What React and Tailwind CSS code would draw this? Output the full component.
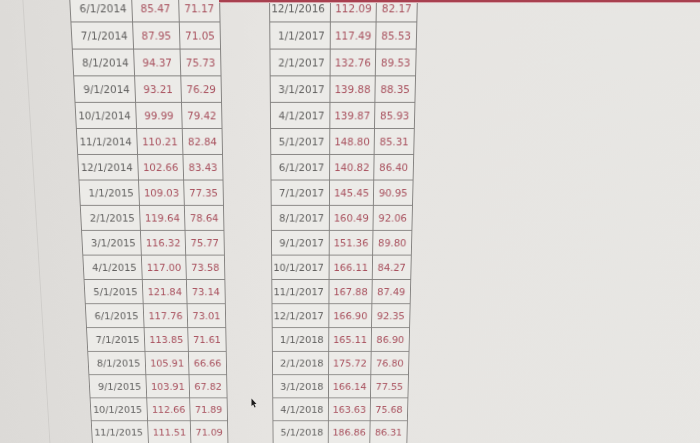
const LEFT = [
  ['6/1/2014', '85.47', '71.17'],
  ['7/1/2014', '87.95', '71.05'],
  ['8/1/2014', '94.37', '75.73'],
  ['9/1/2014', '93.21', '76.29'],
  ['10/1/2014', '99.99', '79.42'],
  ['11/1/2014', '110.21', '82.84'],
  ['12/1/2014', '102.66', '83.43'],
  ['1/1/2015', '109.03', '77.35'],
  ['2/1/2015', '119.64', '78.64'],
  ['3/1/2015', '116.32', '75.77'],
  ['4/1/2015', '117.00', '73.58'],
  ['5/1/2015', '121.84', '73.14'],
  ['6/1/2015', '117.76', '73.01'],
  ['7/1/2015', '113.85', '71.61'],
  ['8/1/2015', '105.91', '66.66'],
  ['9/1/2015', '103.91', '67.82'],
  ['10/1/2015', '112.66', '71.89'],
  ['11/1/2015', '111.51', '71.09'],
];

const RIGHT = [
  ['12/1/2016', '112.09', '82.17'],
  ['1/1/2017', '117.49', '85.53'],
  ['2/1/2017', '132.76', '89.53'],
  ['3/1/2017', '139.88', '88.35'],
  ['4/1/2017', '139.87', '85.93'],
  ['5/1/2017', '148.80', '85.31'],
  ['6/1/2017', '140.82', '86.40'],
  ['7/1/2017', '145.45', '90.95'],
  ['8/1/2017', '160.49', '92.06'],
  ['9/1/2017', '151.36', '89.80'],
  ['10/1/2017', '166.11', '84.27'],
  ['11/1/2017', '167.88', '87.49'],
  ['12/1/2017', '166.90', '92.35'],
  ['1/1/2018', '165.11', '86.90'],
  ['2/1/2018', '175.72', '76.80'],
  ['3/1/2018', '166.14', '77.55'],
  ['4/1/2018', '163.63', '75.68'],
  ['5/1/2018', '186.86', '86.31'],
];

const CELL = 'h-[27px] border border-[#858381] p-0';

function PriceTable({ rows, widths }) {
  return (
    <table className="table-fixed border-collapse bg-[#ecebe8]">
      <colgroup>
        {widths.map((w, i) => <col key={i} style={{ width: w }} />)}
      </colgroup>
      <tbody>
        {rows.map(([date, a, b]) => (
          <tr key={date}>
            <td className={`${CELL} pr-[5px] text-right text-[#61605f]`}>{date}</td>
            <td className={`${CELL} text-center text-[#a8505d]`}>{a}</td>
            <td className={`${CELL} text-center text-[#a8505d]`}>{b}</td>
          </tr>
        ))}
      </tbody>
    </table>
  );
}

export default function App() {
  return (
    <div className="relative w-[700px] h-[443px] overflow-hidden bg-[#e3e1de] [perspective:500px] [perspective-origin:307px_124px] font-['DejaVu_Sans',sans-serif] text-[10.5px] leading-none">
      {/* sheet of paper, tilted away at the bottom (wider than the view so its edges never show) */}
      <div className="-mt-[6px] -ml-[120px] w-[960px] h-[520px] pl-[120px] flex origin-top [transform:rotateX(-6.3deg)] bg-gradient-to-r from-[#d9d7d4] via-[#e6e4e1] via-40% to-[#e8e7e4]">
        <div className="w-[23px] self-stretch border-r border-[#cfcdca]" />
        <div className="ml-[46px] flex items-start gap-[49px]">
          <PriceTable rows={LEFT} widths={[62, 47, 41]} />
          <PriceTable rows={RIGHT} widths={[61, 46, 41]} />
        </div>
      </div>

      {/* red edge at the top */}
      <div className="absolute top-0 left-[219px] right-0 h-[2px] bg-[#a8404f]" />
      <div className="absolute top-[2px] left-[219px] right-0 h-px bg-[#d9a7ae]" />

      {/* mouse pointer */}
      <svg className="absolute left-[251px] top-[398px]" width="6" height="10" viewBox="0 0 6 10">
        <path d="M0.5 0.5 L0.5 8 L2.2 6.4 L3.6 9.5 L4.6 9 L3.3 6 L5.5 6 Z" fill="#1c1c1c" />
      </svg>
    </div>
  );
}
